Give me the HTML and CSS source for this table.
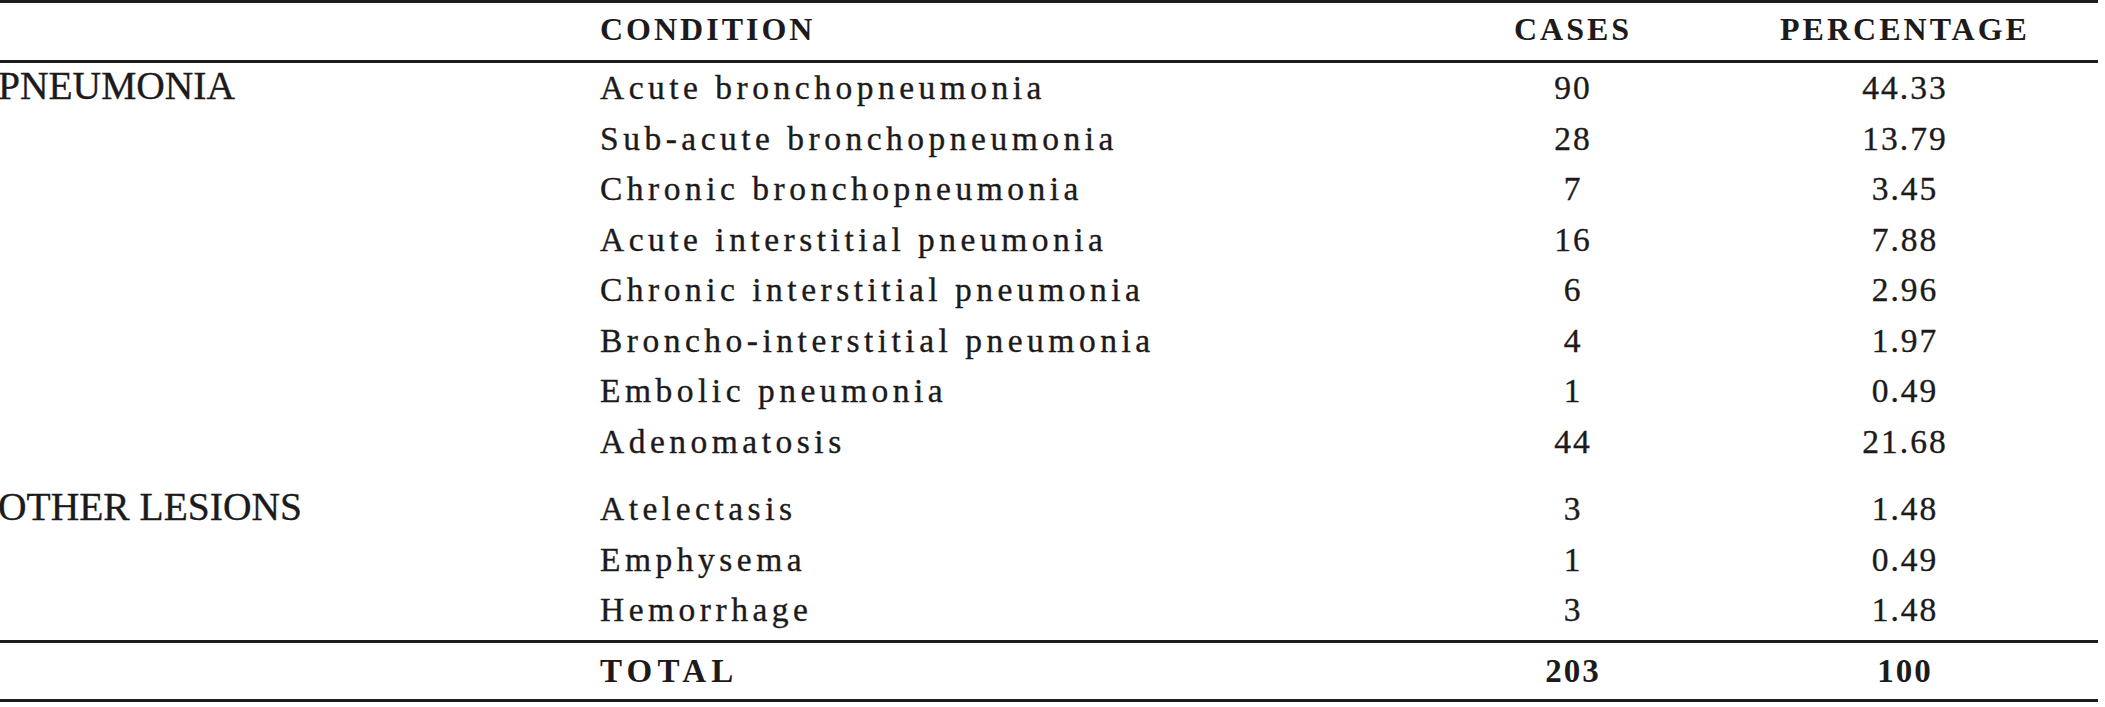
FILE: index.html
```html
<!DOCTYPE html>
<html lang="en">
<head>
<meta charset="utf-8">
<title>Lung lesions</title>
<link rel="stylesheet" href="styles.css">
</head>
<body>
<table class="lesions">
  <colgroup>
    <col class="c-group">
    <col class="c-cond">
    <col class="c-cases">
    <col class="c-pct">
  </colgroup>
  <thead>
    <tr>
      <th class="group"></th>
      <th class="cond">CONDITION</th>
      <th class="num">CASES</th>
      <th class="num pct">PERCENTAGE</th>
    </tr>
  </thead>
  <tbody>
    <tr>
      <th class="group" rowspan="8" scope="rowgroup">PNEUMONIA</th>
      <td class="cond">Acute bronchopneumonia</td><td class="num">90</td><td class="num pct">44.33</td>
    </tr>
    <tr><td class="cond">Sub-acute bronchopneumonia</td><td class="num">28</td><td class="num pct">13.79</td></tr>
    <tr><td class="cond">Chronic bronchopneumonia</td><td class="num">7</td><td class="num pct">3.45</td></tr>
    <tr><td class="cond">Acute interstitial pneumonia</td><td class="num">16</td><td class="num pct">7.88</td></tr>
    <tr><td class="cond">Chronic interstitial pneumonia</td><td class="num">6</td><td class="num pct">2.96</td></tr>
    <tr><td class="cond">Broncho-interstitial pneumonia</td><td class="num">4</td><td class="num pct">1.97</td></tr>
    <tr><td class="cond">Embolic pneumonia</td><td class="num">1</td><td class="num pct">0.49</td></tr>
    <tr><td class="cond">Adenomatosis</td><td class="num">44</td><td class="num pct">21.68</td></tr>
  </tbody>
  <tbody class="second">
    <tr class="first">
      <th class="group" rowspan="3" scope="rowgroup">OTHER LESIONS</th>
      <td class="cond">Atelectasis</td><td class="num">3</td><td class="num pct">1.48</td>
    </tr>
    <tr><td class="cond">Emphysema</td><td class="num">1</td><td class="num pct">0.49</td></tr>
    <tr class="last"><td class="cond">Hemorrhage</td><td class="num">3</td><td class="num pct">1.48</td></tr>
  </tbody>
  <tfoot>
    <tr>
      <td class="group"></td>
      <td class="cond">TOTAL</td>
      <td class="num">203</td>
      <td class="num pct">100</td>
    </tr>
  </tfoot>
</table>
</body>
</html>
```

FILE: styles.css
```css
html, body {
  margin: 0;
  padding: 0;
  background: #ffffff;
}

body {
  color: #1c1a1b;
  font-family: "Liberation Serif", "Times New Roman", serif;
}

.lesions {
  width: 2098px;
  table-layout: fixed;
  border-collapse: separate;
  border-spacing: 0;
  border-top: 3px solid #1c1c1c;
  border-bottom: 3px solid #1c1c1c;
}

.c-group { width: 600px; }
.c-cond  { width: 780px; }
.c-cases { width: 386px; }
.c-pct   { width: 332px; }

.lesions th,
.lesions td {
  padding: 0;
  vertical-align: top;
  white-space: nowrap;
  font-weight: normal;
  text-align: left;
  -webkit-text-stroke: 0.35px #1c1a1b;
}

/* header row */
.lesions thead th {
  font-size: 32px;
  font-weight: bold;
  letter-spacing: 3px;
  line-height: 53px;
  padding-bottom: 4px;
  border-bottom: 3px solid #1c1c1c;
  -webkit-text-stroke: 0;
}

.lesions .num {
  text-align: center;
}

.lesions .pct {
  padding-right: 54px;
}

/* body rows */
.lesions tbody td {
  font-size: 33.5px;
  line-height: 50.5px;
}

.lesions tbody td.cond {
  letter-spacing: 4.5px;
}

.lesions tbody td.num {
  letter-spacing: 2px;
}

.lesions tbody th.group {
  font-size: 39.5px;
  line-height: 46.4px;
  text-indent: -2px;
}

.second .first td,
.second .first th {
  padding-top: 17px;
}

.second .last td {
  padding-bottom: 4.5px;
}

/* total row */
.lesions tfoot td {
  font-size: 33px;
  font-weight: bold;
  line-height: 56px;
  border-top: 3px solid #1c1c1c;
  -webkit-text-stroke: 0;
}

.lesions tfoot td.cond {
  letter-spacing: 5.2px;
}

.lesions tfoot td.num {
  letter-spacing: 2px;
}
```
